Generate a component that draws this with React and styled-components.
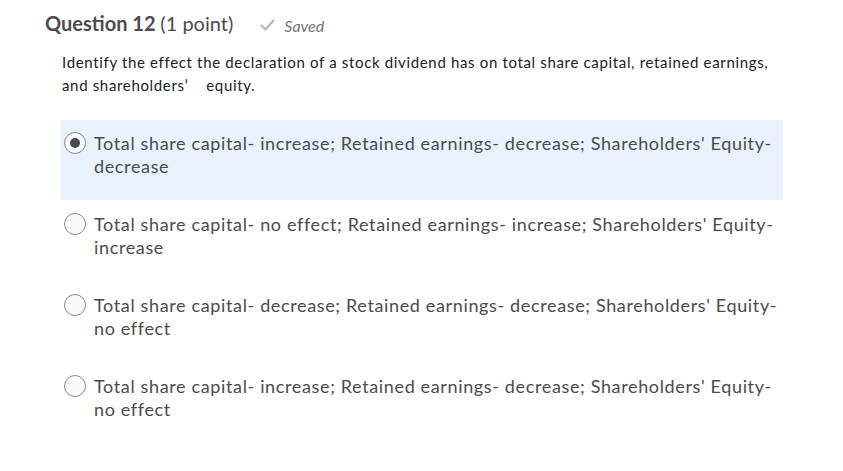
import React from "react";
import styled, { createGlobalStyle } from "styled-components";

const Global = createGlobalStyle`
  html, body { margin: 0; padding: 0; background: #ffffff; }
  body { font-family: Lato, "Noto Sans", sans-serif; color: #494c4e; }
`;

const Page = styled.div`
  width: 843px;
  height: 471px;
  padding: 9px 0 0 45px;
  box-sizing: border-box;
`;

const Header = styled.div`
  display: flex;
  align-items: baseline;
`;

const Title = styled.h2`
  margin: 0;
  font-size: 20px;
  line-height: 28px;
  font-weight: 700;
  color: #494c4e;
`;

const Points = styled.span`
  font-weight: 400;
`;

const Status = styled.span`
  display: inline-flex;
  align-items: center;
  gap: 9px;
  margin-left: 27px;
  font-size: 16px;
  font-style: italic;
  color: #6e7376;
`;

const Prompt = styled.p`
  margin: 14px 0 0 17px;
  width: 722px;
  font-size: 15px;
  line-height: 23px;
  letter-spacing: 0.66px;
  color: #202122;
`;

const Options = styled.div`
  display: flex;
  flex-direction: column;
  gap: 1px;
  margin: 23px 0 0 16px;
  width: 722px;
`;

const Option = styled.label`
  display: flex;
  align-items: flex-start;
  gap: 8px;
  height: 80px;
  box-sizing: border-box;
  padding: 12px 0 0 3px;
  background: ${(p) => (p.$selected ? "#e8f2fc" : "transparent")};
`;

const Radio = styled.span`
  flex: none;
  width: 22px;
  height: 22px;
  box-sizing: border-box;
  border-radius: 50%;
  border: 1px solid #868c8f;
  background: #f9fbff;
  display: flex;
  align-items: center;
  justify-content: center;
  &::after {
    content: "";
    display: ${(p) => (p.$checked ? "block" : "none")};
    width: 10px;
    height: 10px;
    border-radius: 50%;
    background: #494c4e;
  }
`;

const OptionText = styled.span`
  font-size: 18px;
  line-height: 23px;
  letter-spacing: 0.64px;
  color: #494c4e;
  width: 686px;
`;

const Check = () => (
  <svg width="15" height="12" viewBox="0 0 15 12" aria-hidden="true">
    <path d="M1.5 6.5 L5.5 10.5 L13.5 1.5" fill="none" stroke="#b3b7ba" strokeWidth="2" strokeLinecap="round" strokeLinejoin="round" />
  </svg>
);

const options = [
  "Total share capital- increase; Retained earnings- decrease; Shareholders' Equity-decrease",
  "Total share capital- no effect; Retained earnings- increase; Shareholders' Equity-increase",
  "Total share capital- decrease; Retained earnings- decrease; Shareholders' Equity- no effect",
  "Total share capital- increase; Retained earnings- decrease; Shareholders' Equity- no effect",
];

export default function App() {
  return (
    <>
      <Global />
      <Page>
        <Header>
          <Title>
            Question 12 <Points>(1 point)</Points>
          </Title>
          <Status>
            <Check />
            Saved
          </Status>
        </Header>
        <Prompt>
          Identify the effect the declaration of a stock dividend has on total share capital, retained earnings, and shareholders’&nbsp;&nbsp;&nbsp; equity.
        </Prompt>
        <Options>
          {options.map((o, i) => (
            <Option key={i} $selected={i === 0}>
              <Radio $checked={i === 0} />
              <OptionText>{o}</OptionText>
            </Option>
          ))}
        </Options>
      </Page>
    </>
  );
}
